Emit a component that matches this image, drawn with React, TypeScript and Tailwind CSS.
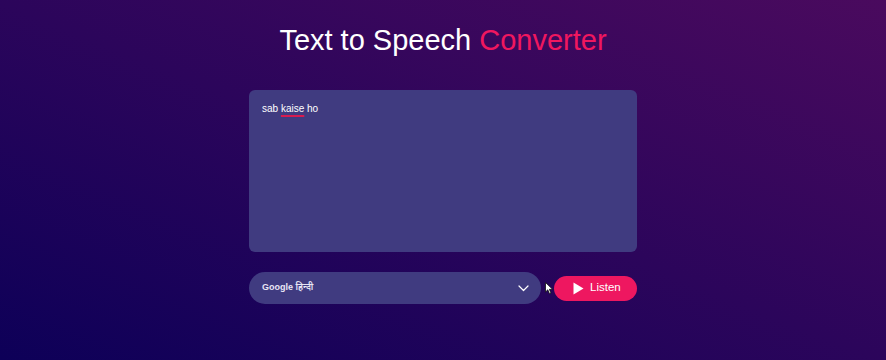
import React from "react";

export default function App() {
  return (
    <div
      className="relative w-[886px] h-[360px] overflow-hidden flex flex-col items-center bg-[linear-gradient(to_right_top,#0d0058,#4a0a5e)]"
      style={{ fontFamily: '"Liberation Sans", Arial, "Noto Sans", sans-serif' }}
    >
      <h1 className="mt-[22px] text-[29px] leading-[36px] text-white">
        Text to Speech <span className="text-[#f0175f]">Converter</span>
      </h1>
      <div className="mt-[32px] w-[388px] h-[162px] rounded-[6px] bg-[#403b80] px-[13px] py-[12px]">
        <p className="text-[10px] leading-[13px] text-white">
          sab{" "}
          <span className="underline decoration-[#d81b50] decoration-[1.5px] underline-offset-[3px]">
            kaise
          </span>{" "}
          ho
        </p>
      </div>
      <div className="mt-[20px] w-[388px] flex items-center justify-between">
        <div className="w-[292px] h-[32px] rounded-full bg-[#403b80] flex items-center justify-between pl-[13px] pr-[12px]">
          <span
            className="text-[9px] font-semibold text-[#e8e6f5]"
            style={{ fontFamily: '"Liberation Sans", "Noto Sans", "Noto Sans Devanagari", sans-serif' }}
          >
            Google हिन्दी
          </span>
          <svg width="11" height="7" viewBox="0 0 11 7" fill="none">
            <path d="M1 1 L5.5 5.5 L10 1" stroke="#ffffff" strokeWidth="1.2" strokeLinecap="round" strokeLinejoin="round" />
          </svg>
        </div>
        <div className="relative w-[83px] h-[25px] rounded-full bg-[#ee1760] flex items-center pl-[19px] gap-[6px]">
          <svg width="11" height="13" viewBox="0 0 11 13">
            <path d="M0.5 0.5 L10.5 6.5 L0.5 12.5 Z" fill="#ffffff" />
          </svg>
          <span className="text-[11.5px] text-white leading-none">Listen</span>
          <svg
            className="absolute left-[-9px] top-[6px]"
            width="9"
            height="13"
            viewBox="0 0 9 13"
          >
            <path d="M0.5 0.5 L0.5 10 L2.8 7.8 L4.5 11.8 L6 11.1 L4.4 7.3 L7.6 7.3 Z" fill="#ffffff" stroke="#111111" strokeWidth="0.8" strokeLinejoin="round" />
          </svg>
        </div>
      </div>
    </div>
  );
}
